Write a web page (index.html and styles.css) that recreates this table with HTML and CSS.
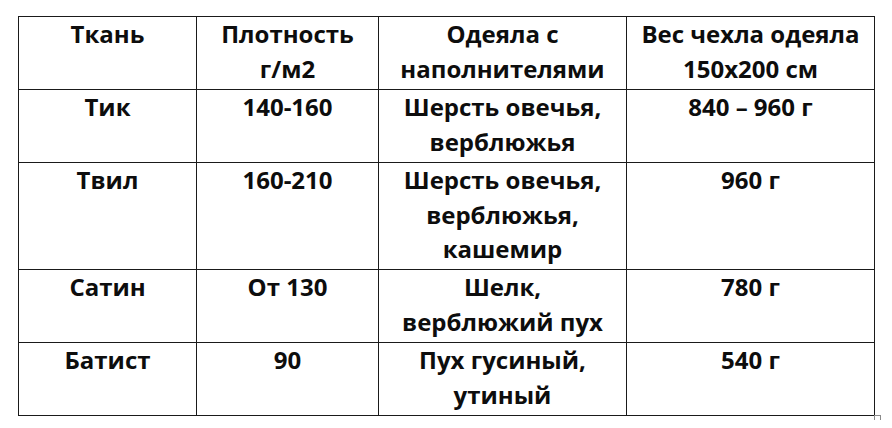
FILE: index.html
```html
<!DOCTYPE html>
<html lang="ru">
<head>
<meta charset="utf-8">
<link rel="stylesheet" href="styles.css">
</head>
<body>
<div class="page">
  <div class="wrap">
    <table class="fabric">
      <colgroup>
        <col class="c1"><col class="c2"><col class="c3"><col class="c4">
      </colgroup>
      <tr class="r-head">
        <td>Ткань</td>
        <td>Плотность<br>г/м2</td>
        <td>Одеяла с<br>наполнителями</td>
        <td>Вес чехла одеяла<br>150х200 см</td>
      </tr>
      <tr class="r2">
        <td>Тик</td>
        <td>140-160</td>
        <td>Шерсть овечья,<br>верблюжья</td>
        <td>840 – 960 г</td>
      </tr>
      <tr class="r3">
        <td>Твил</td>
        <td>160-210</td>
        <td>Шерсть овечья,<br>верблюжья,<br>кашемир</td>
        <td>960 г</td>
      </tr>
      <tr class="r2">
        <td>Сатин</td>
        <td>От 130</td>
        <td>Шелк,<br>верблюжий пух</td>
        <td>780 г</td>
      </tr>
      <tr class="r2">
        <td>Батист</td>
        <td>90</td>
        <td>Пух гусиный,<br>утиный</td>
        <td>540 г</td>
      </tr>
    </table>
    <span class="handle"></span>
  </div>
</div>
</body>
</html>
```

FILE: styles.css
```css
html, body {
  margin: 0;
  padding: 0;
  background: #ffffff;
}
.page {
  padding: 16px 0 0 18px;
}
.wrap {
  position: relative;
  display: inline-block;
}
.fabric {
  border-collapse: collapse;
  table-layout: fixed;
  width: 856px;
  font-family: "Open Sans", sans-serif;
  font-weight: bold;
  font-size: 24px;
  line-height: 34.5px;
  color: #0d0d0d;
}
.c1 { width: 178px; }
.c2 { width: 182px; }
.c3 { width: 248px; }
.c4 { width: 248px; }
.fabric td {
  border: 1px solid #1a1a1a;
  text-align: center;
  vertical-align: top;
  padding: 0;
  white-space: nowrap;
}
.r-head td, .r2 td { height: 72px; }
.r3 td { height: 106px; }
.handle {
  position: absolute;
  right: -6px;
  bottom: -6px;
  width: 5px;
  height: 5px;
  border: 1px solid #8a8a8a;
  background: #ffffff;
}
```
